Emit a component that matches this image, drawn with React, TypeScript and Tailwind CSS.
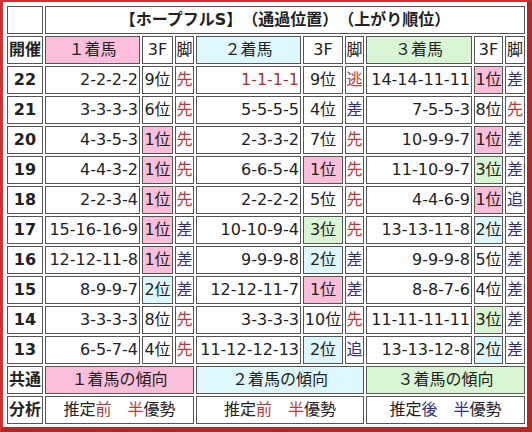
import React from "react";

type Bg = "" | "p" | "c" | "g";
type Row = {
  n: string;
  a: [string, string, Bg, string];
  b: [string, string, Bg, string];
  c: [string, string, Bg, string];
  bRed?: boolean;
};

const rows: Row[] = [
  { n: "22", a: ["2-2-2-2", "9位", "", "先"], b: ["1-1-1-1", "9位", "", "逃"], c: ["14-14-11-11", "1位", "p", "差"], bRed: true },
  { n: "21", a: ["3-3-3-3", "6位", "", "先"], b: ["5-5-5-5", "4位", "", "差"], c: ["7-5-5-3", "8位", "", "先"] },
  { n: "20", a: ["4-3-5-3", "1位", "p", "先"], b: ["2-3-3-2", "7位", "", "先"], c: ["10-9-9-7", "1位", "p", "差"] },
  { n: "19", a: ["4-4-3-2", "1位", "p", "先"], b: ["6-6-5-4", "1位", "p", "先"], c: ["11-10-9-7", "3位", "g", "差"] },
  { n: "18", a: ["2-2-3-4", "1位", "p", "先"], b: ["2-2-2-2", "5位", "", "先"], c: ["4-4-6-9", "1位", "p", "追"] },
  { n: "17", a: ["15-16-16-9", "1位", "p", "差"], b: ["10-10-9-4", "3位", "g", "先"], c: ["13-13-11-8", "2位", "c", "差"] },
  { n: "16", a: ["12-12-11-8", "1位", "p", "差"], b: ["9-9-9-8", "2位", "c", "差"], c: ["9-9-9-8", "5位", "", "差"] },
  { n: "15", a: ["8-9-9-7", "2位", "c", "差"], b: ["12-12-11-7", "1位", "p", "差"], c: ["8-8-7-6", "4位", "", "差"] },
  { n: "14", a: ["3-3-3-3", "8位", "", "先"], b: ["3-3-3-3", "10位", "", "先"], c: ["11-11-11-11", "3位", "g", "差"] },
  { n: "13", a: ["6-5-7-4", "4位", "", "先"], b: ["11-12-12-13", "2位", "c", "追"], c: ["13-13-12-8", "2位", "c", "差"] },
];

const cell = "h-[28px] border border-[#555] p-0 align-middle whitespace-nowrap";

function bgClass(b: Bg) {
  if (b === "p") return "bg-[#fbbfdb]";
  if (b === "c") return "bg-[#ddf7fc]";
  if (b === "g") return "bg-[#d9f5d3]";
  return "bg-white";
}

function legColor(s: string) {
  return s === "先" || s === "逃" ? "text-[#b83b3b]" : "text-[#2e2e86]";
}

function Group({ d, red }: { d: [string, string, Bg, string]; red?: boolean }) {
  return (
    <>
      <td className={`${cell} text-right pr-px ${red ? "text-[#a83232]" : ""}`}>{d[0]}</td>
      <td className={`${cell} text-center ${bgClass(d[2])}`}>{d[1]}</td>
      <td className={`${cell} text-center ${legColor(d[3])}`}>{d[3]}</td>
    </>
  );
}

export default function App() {
  return (
    <div
      className="w-[532px] h-[432px] bg-white border-t-2 border-l-[3px] border-r-[5px] border-b-[5px] border-t-[#cc3333] border-l-[#cc3333] border-r-[#b02828] border-b-[#b02828] pt-[2px] pl-[2px] text-[16px] text-[#222] [text-spacing-trim:space-all]"
      style={{ fontFamily: '"DejaVu Sans", "Noto Sans CJK JP", sans-serif' }}
    >
      <table className="table-fixed border-separate border-spacing-[2px] w-[522px] leading-[20px]">
        <colgroup>
          <col className="w-[36px]" />
          <col className="w-[95px]" />
          <col className="w-[31px]" />
          <col className="w-[19px]" />
          <col className="w-[105px]" />
          <col className="w-[40px]" />
          <col className="w-[19px]" />
          <col className="w-[106px]" />
          <col className="w-[29px]" />
          <col className="w-[20px]" />
        </colgroup>
        <tbody>
          <tr>
            <td className={cell}></td>
            <td className={`${cell} text-center font-bold`} colSpan={9}>
              【ホープフルS】（通過位置）（上がり順位）
            </td>
          </tr>
          <tr>
            <td className={`${cell} text-center font-bold`}>開催</td>
            <td className={`${cell} text-center bg-[#fbbfdb]`}>１着馬</td>
            <td className={`${cell} text-center`}>3F</td>
            <td className={`${cell} text-center`}>脚</td>
            <td className={`${cell} text-center bg-[#ddf7fc]`}>２着馬</td>
            <td className={`${cell} text-center`}>3F</td>
            <td className={`${cell} text-center`}>脚</td>
            <td className={`${cell} text-center bg-[#d9f5d3]`}>３着馬</td>
            <td className={`${cell} text-center`}>3F</td>
            <td className={`${cell} text-center`}>脚</td>
          </tr>
          {rows.map((r) => (
            <tr key={r.n}>
              <td className={`${cell} text-center font-bold`}>{r.n}</td>
              <Group d={r.a} />
              <Group d={r.b} red={r.bRed} />
              <Group d={r.c} />
            </tr>
          ))}
          <tr>
            <td className={`${cell} text-center font-bold`}>共通</td>
            <td className={`${cell} text-center bg-[#fbbfdb]`} colSpan={3}>１着馬の傾向</td>
            <td className={`${cell} text-center bg-[#ddf7fc]`} colSpan={3}>２着馬の傾向</td>
            <td className={`${cell} text-center bg-[#d9f5d3]`} colSpan={3}>３着馬の傾向</td>
          </tr>
          <tr>
            <td className={`${cell} text-center font-bold`}>分析</td>
            <td className={`${cell} text-center`} colSpan={3}>
              推定<span className="text-[#b83b3b]">前</span>　<span className="text-[#b83b3b]">半</span>優勢
            </td>
            <td className={`${cell} text-center`} colSpan={3}>
              推定<span className="text-[#b83b3b]">前</span>　<span className="text-[#b83b3b]">半</span>優勢
            </td>
            <td className={`${cell} text-center`} colSpan={3}>
              推定<span className="text-[#2e2e86]">後</span>　<span className="text-[#2e2e86]">半</span>優勢
            </td>
          </tr>
        </tbody>
      </table>
    </div>
  );
}
